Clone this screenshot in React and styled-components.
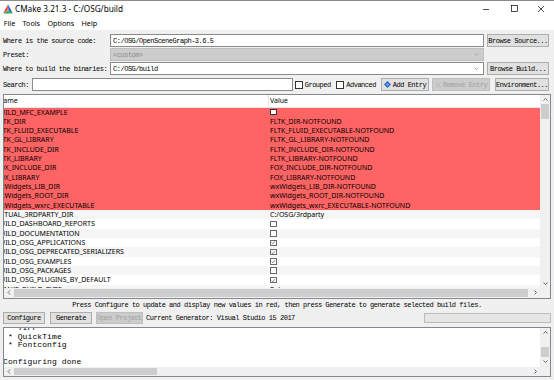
import React from 'react'
import styled, { createGlobalStyle } from 'styled-components'

const mono = `"Liberation Mono", "DejaVu Sans Mono", monospace`
const sans = `"Noto Sans", "DejaVu Sans", sans-serif`

const GlobalStyle = createGlobalStyle`
  html, body {
    margin: 0;
    padding: 0;
    background: #f0f0f0;
    overflow: hidden;
  }
  body {
    font-family: ${sans};
    color: #000;
  }
`

const monoText = `
  font-family: ${mono};
  font-size: 7px;
  letter-spacing: -0.48px;
`

const Window = styled.div`
  width: 554px;
  height: 380px;
  display: flex;
  flex-direction: column;
  background: #f0f0f0;
  border-top: 1px solid #8c8c8c;
  box-sizing: border-box;
  overflow: hidden;
`

const TitleBar = styled.div`
  height: 15px;
  background: #fff;
  display: flex;
  align-items: center;
  padding-left: 3px;
`

const TitleText = styled.span`
  font-size: 8.2px;
  margin-left: 2px;
  white-space: nowrap;
`

const WinControls = styled.div`
  margin-left: auto;
  display: flex;
  height: 100%;
`

const WinButton = styled.div`
  width: ${p => p.$w || 28}px;
  height: 100%;
  display: flex;
  align-items: center;
  justify-content: center;
`

const MenuBar = styled.div`
  height: 14px;
  background: #fff;
  display: flex;
  align-items: center;
`

const MenuItem = styled.span`
  font-size: 7.2px;
  padding: 0 3.7px;
`

const Panel = styled.div`
  flex: 1;
  display: flex;
  flex-direction: column;
  padding: 4px 3px 0 3px;
  min-height: 0;
`

const FormRow = styled.div`
  display: grid;
  grid-template-columns: 104px 1fr 62px;
  column-gap: 3px;
  height: 13px;
  margin-bottom: ${p => p.$mb || 0}px;
  padding-right: 2px;
`

const Label = styled.span`
  ${monoText}
  white-space: nowrap;
  align-self: center;
  width: ${p => (p.$w ? `${p.$w}px` : 'auto')};
  flex: none;
`

const Field = styled.div`
  border: 1px solid ${p => (p.$disabled ? '#bfbfbf' : '#8a8a8a')};
  background: ${p => (p.$disabled ? '#cccccc' : '#fff')};
  color: ${p => (p.$disabled ? '#8c8c8c' : '#000')};
  ${monoText}
  box-sizing: border-box;
  display: flex;
  align-items: center;
  padding: 0 4px 0 2px;
  white-space: nowrap;
  overflow: hidden;
  min-width: 0;
  height: 13px;
  flex: ${p => (p.$grow ? 1 : 'none')};
`

const DropArrow = styled.svg`
  margin-left: auto;
  flex: none;
`

const Button = styled.div`
  background: ${p => (p.$disabled ? '#cccccc' : '#e1e1e1')};
  border: 1px solid ${p => (p.$disabled ? '#bfbfbf' : '#adadad')};
  color: ${p => (p.$disabled ? '#a0a0a0' : '#000')};
  ${monoText}
  box-sizing: border-box;
  display: flex;
  align-items: center;
  justify-content: center;
  gap: 2px;
  white-space: nowrap;
  width: ${p => (p.$w ? `${p.$w}px` : 'auto')};
  height: ${p => p.$h || 13}px;
  margin-left: ${p => p.$ml || 0}px;
  flex: none;
`

const SearchRow = styled.div`
  display: flex;
  align-items: center;
  height: 13px;
  margin-bottom: 2.5px;
  padding-right: 2px;
`

const CheckGroup = styled.div`
  display: flex;
  align-items: center;
  gap: 2px;
  margin-left: ${p => p.$ml}px;
  flex: none;
`

const Box = styled.span`
  width: ${p => p.$size || 8}px;
  height: ${p => p.$size || 8}px;
  box-sizing: border-box;
  border: 1px solid ${p => p.$color || '#333'};
  background: #fff;
  display: inline-flex;
  align-items: center;
  justify-content: center;
  flex: none;
`

const TableFrame = styled.div`
  height: 205px;
  border: 1px solid #828790;
  background: #fff;
  box-sizing: border-box;
  display: grid;
  grid-template-columns: 1fr 10px;
  grid-template-rows: 1fr 10px;
  overflow: hidden;
`

const Viewport = styled.div`
  overflow: hidden;
  min-height: 0;
`

const HeaderRow = styled.div`
  display: grid;
  grid-template-columns: 264px 1fr;
  height: 13px;
  border-bottom: 1px solid #e5e5e5;
  box-sizing: border-box;
  font-size: 7px;
`

const HeaderCell = styled.div`
  display: flex;
  align-items: center;
  overflow: hidden;
  white-space: nowrap;
  border-left: ${p => (p.$first ? 'none' : '1px solid #e5e5e5')};
  padding-left: ${p => (p.$first ? 0 : 1)}px;
  span {
    margin-left: ${p => (p.$first ? '-6px' : '0')};
  }
`

const Row = styled.div`
  display: grid;
  grid-template-columns: 264px 1fr;
  height: 9.33px;
  line-height: 9.33px;
  font-size: 7px;
  background: ${p => (p.$red ? '#ff6464' : p.$alt ? '#f6f6f6' : '#fff')};
`

const NameCell = styled.div`
  overflow: hidden;
  white-space: nowrap;
  span {
    margin-left: -8.5px;
  }
`

const ValueCell = styled.div`
  padding-left: 2px;
  white-space: nowrap;
  overflow: hidden;
  display: flex;
  align-items: center;
`

const VScroll = styled.div`
  background: #f0f0f0;
  display: flex;
  flex-direction: column;
  min-height: 0;
`

const HScroll = styled.div`
  background: #f0f0f0;
  display: flex;
  align-items: stretch;
`

const ArrowBox = styled.div`
  width: 10px;
  height: ${p => p.$h || 10}px;
  display: flex;
  align-items: center;
  justify-content: center;
  flex: none;
`

const Thumb = styled.div`
  background: #cdcdcd;
  flex: ${p => (p.$grow ? 1 : 'none')};
  width: ${p => (p.$w ? `${p.$w}px` : 'auto')};
  height: ${p => (p.$h ? `${p.$h}px` : 'auto')};
  margin: ${p => p.$m || '0'};
`

const Spacer = styled.div`
  flex: 1;
`

const Corner = styled.div`
  background: #f0f0f0;
`

const StatusLine = styled.div`
  height: 13px;
  display: flex;
  align-items: center;
  justify-content: center;
  ${monoText}
  white-space: nowrap;
`

const ActionRow = styled.div`
  height: 12px;
  display: flex;
  align-items: center;
  margin-bottom: 3px;
`

const GeneratorText = styled.span`
  ${monoText}
  margin-left: 3px;
  white-space: nowrap;
`

const Progress = styled.div`
  margin-left: auto;
  width: 127px;
  height: 10px;
  background: #e6e6e6;
  border: 1px solid #bcbcbc;
  box-sizing: border-box;
`

const LogFrame = styled.div`
  height: 50px;
  border: 1px solid #828790;
  background: #fff;
  box-sizing: border-box;
  display: grid;
  grid-template-columns: 1fr 10px;
  grid-template-rows: 1fr 9px;
  overflow: hidden;
`

const LogText = styled.pre`
  margin: -3.6px 0 0 -1px;
  font-family: ${mono};
  font-size: 8px;
  letter-spacing: 0.1px;
  line-height: 8.6px;
`

const Chevron = ({ dir }) => {
  const pts = {
    up: '0.5,3.5 2.5,1.5 4.5,3.5',
    down: '0.5,1.5 2.5,3.5 4.5,1.5',
    left: '3,0.5 1,2.5 3,4.5',
    right: '1.5,0.5 3.5,2.5 1.5,4.5'
  }[dir]
  return (
    <svg width="5" height="5" viewBox="0 0 5 5">
      <polyline points={pts} fill="none" stroke="#606060" strokeWidth="0.9" />
    </svg>
  )
}

const CMakeLogo = () => (
  <svg width="10" height="10" viewBox="0 0 10 10">
    <polygon points="5,0.3 0.2,9.6 4.6,6.2" fill="#e53935" />
    <polygon points="5,0.3 9.8,9.6 5.4,6.4" fill="#1e5fc2" />
    <polygon points="0.2,9.6 9.8,9.6 5.1,6.6" fill="#3aa845" />
  </svg>
)

const Check = ({ checked, color = '#333' }) => (
  <Box $size={6.5} $color={color}>
    {checked && (
      <svg width="5" height="5" viewBox="0 0 5 5">
        <polyline points="0.6,2.6 1.9,3.9 4.4,1" fill="none" stroke="#555" strokeWidth="0.8" />
      </svg>
    )}
  </Box>
)

const rows = [
  { name: 'BUILD_MFC_EXAMPLE', check: false, red: true },
  { name: 'FLTK_DIR', value: 'FLTK_DIR-NOTFOUND', red: true },
  { name: 'FLTK_FLUID_EXECUTABLE', value: 'FLTK_FLUID_EXECUTABLE-NOTFOUND', red: true },
  { name: 'FLTK_GL_LIBRARY', value: 'FLTK_GL_LIBRARY-NOTFOUND', red: true },
  { name: 'FLTK_INCLUDE_DIR', value: 'FLTK_INCLUDE_DIR-NOTFOUND', red: true },
  { name: 'FLTK_LIBRARY', value: 'FLTK_LIBRARY-NOTFOUND', red: true },
  { name: 'FOX_INCLUDE_DIR', value: 'FOX_INCLUDE_DIR-NOTFOUND', red: true },
  { name: 'FOX_LIBRARY', value: 'FOX_LIBRARY-NOTFOUND', red: true },
  { name: 'wxWidgets_LIB_DIR', value: 'wxWidgets_LIB_DIR-NOTFOUND', red: true },
  { name: 'wxWidgets_ROOT_DIR', value: 'wxWidgets_ROOT_DIR-NOTFOUND', red: true },
  { name: 'wxWidgets_wxrc_EXECUTABLE', value: 'wxWidgets_wxrc_EXECUTABLE-NOTFOUND', red: true },
  { name: 'ACTUAL_3RDPARTY_DIR', value: 'C:/OSG/3rdparty' },
  { name: 'BUILD_DASHBOARD_REPORTS', check: false },
  { name: 'BUILD_DOCUMENTATION', check: false },
  { name: 'BUILD_OSG_APPLICATIONS', check: true },
  { name: 'BUILD_OSG_DEPRECATED_SERIALIZERS', check: true },
  { name: 'BUILD_OSG_EXAMPLES', check: true },
  { name: 'BUILD_OSG_PACKAGES', check: false },
  { name: 'BUILD_OSG_PLUGINS_BY_DEFAULT', check: true },
  { name: 'CMAKE_BUILD_TYPE', value: 'Release' }
]

const logLines = [' * TIFF', ' * QuickTime', ' * Fontconfig', '', 'Configuring done']

export default function App() {
  return (
    <>
      <GlobalStyle />
      <Window>
        <TitleBar>
          <CMakeLogo />
          <TitleText>CMake 3.21.3 - C:/OSG/build</TitleText>
          <WinControls>
            <WinButton>
              <svg width="6" height="6" viewBox="0 0 6 6"><line x1="0" y1="3.5" x2="6" y2="3.5" stroke="#000" strokeWidth="0.7" /></svg>
            </WinButton>
            <WinButton>
              <svg width="7" height="7" viewBox="0 0 7 7"><rect x="0.5" y="0.5" width="6" height="6" fill="none" stroke="#000" strokeWidth="0.7" /></svg>
            </WinButton>
            <WinButton $w={26}>
              <svg width="6" height="6" viewBox="0 0 6 6"><path d="M0 0L6 6M6 0L0 6" stroke="#000" strokeWidth="0.7" /></svg>
            </WinButton>
          </WinControls>
        </TitleBar>
        <MenuBar>
          <MenuItem>File</MenuItem>
          <MenuItem>Tools</MenuItem>
          <MenuItem>Options</MenuItem>
          <MenuItem>Help</MenuItem>
        </MenuBar>
        <Panel>
          <FormRow $mb={1}>
            <Label>Where is the source code:</Label>
            <Field>C:/OSG/OpenSceneGraph-3.6.5</Field>
            <Button>Browse Source...</Button>
          </FormRow>
          <FormRow $mb={1}>
            <Label>Preset:</Label>
            <Field $disabled>
              &lt;custom&gt;
              <DropArrow width="5" height="5" viewBox="0 0 5 5">
                <polyline points="0.5,1.5 2.5,3.5 4.5,1.5" fill="none" stroke="#a0a0a0" strokeWidth="0.8" />
              </DropArrow>
            </Field>
            <span />
          </FormRow>
          <FormRow $mb={3}>
            <Label>Where to build the binaries:</Label>
            <Field>
              C:/OSG/build
              <DropArrow width="5" height="5" viewBox="0 0 5 5">
                <polyline points="0.5,1.5 2.5,3.5 4.5,1.5" fill="none" stroke="#888" strokeWidth="0.8" />
              </DropArrow>
            </Field>
            <Button>Browse Build...</Button>
          </FormRow>
          <SearchRow>
            <Label $w={29}>Search:</Label>
            <Field $grow />
            <CheckGroup $ml={1.5}>
              <Box />
              <Label>Grouped</Label>
            </CheckGroup>
            <CheckGroup $ml={5.5}>
              <Box />
              <Label>Advanced</Label>
            </CheckGroup>
            <Button $w={48} $ml={5}>
              <svg width="7" height="7" viewBox="0 0 7 7">
                <polygon points="3.5,0 7,3.5 3.5,7 0,3.5" fill="#2a66c9" />
                <polygon points="3.5,1.8 5.2,3.5 3.5,5.2 1.8,3.5" fill="#6fa3ee" />
              </svg>
              Add Entry
            </Button>
            <Button $w={58} $ml={3} $disabled>
              <svg width="6" height="6" viewBox="0 0 6 6">
                <path d="M0.5 0.5L5.5 5.5M5.5 0.5L0.5 5.5" stroke="#b4b4b4" strokeWidth="1.1" strokeDasharray="1 0.5" />
              </svg>
              Remove Entry
            </Button>
            <Button $w={54} $ml={5}>Environment...</Button>
          </SearchRow>
          <TableFrame>
            <Viewport>
              <HeaderRow>
                <HeaderCell $first><span>Name</span></HeaderCell>
                <HeaderCell>Value</HeaderCell>
              </HeaderRow>
              {rows.map((r, i) => (
                <Row key={r.name} $red={r.red} $alt={!r.red && i % 2 === 1}>
                  <NameCell><span>{r.name}</span></NameCell>
                  <ValueCell>
                    {r.check !== undefined
                      ? <Check checked={r.check} color={r.red ? '#333' : '#6a6a6a'} />
                      : r.value}
                  </ValueCell>
                </Row>
              ))}
            </Viewport>
            <VScroll>
              <ArrowBox $h={9}><Chevron dir="up" /></ArrowBox>
              <Thumb $h={15} $m="0 1px" />
              <Spacer />
              <ArrowBox $h={9}><Chevron dir="down" /></ArrowBox>
            </VScroll>
            <HScroll>
              <ArrowBox><Chevron dir="left" /></ArrowBox>
              <Thumb $grow $m="1px 2px 1px 0" />
              <ArrowBox><Chevron dir="right" /></ArrowBox>
            </HScroll>
            <Corner />
          </TableFrame>
          <StatusLine>
            Press Configure to update and display new values in red, then press Generate to generate selected build files.
          </StatusLine>
          <ActionRow>
            <Button $w={42} $h={12}>Configure</Button>
            <Button $w={42} $h={12} $ml={5}>Generate</Button>
            <Button $w={47} $h={12} $ml={4} $disabled>Open Project</Button>
            <GeneratorText>Current Generator: Visual Studio 15 2017</GeneratorText>
            <Progress />
          </ActionRow>
          <LogFrame>
            <Viewport>
              <LogText>{logLines.join('\n')}</LogText>
            </Viewport>
            <VScroll>
              <ArrowBox><Chevron dir="up" /></ArrowBox>
              <Spacer />
              <Thumb $h={10} $m="0 1px" />
              <ArrowBox><Chevron dir="down" /></ArrowBox>
            </VScroll>
            <HScroll>
              <ArrowBox $h={9}><Chevron dir="left" /></ArrowBox>
              <Thumb $w={143} $m="1px 0" />
              <Spacer />
              <ArrowBox $h={9}><Chevron dir="right" /></ArrowBox>
            </HScroll>
            <Corner />
          </LogFrame>
        </Panel>
      </Window>
    </>
  )
}
